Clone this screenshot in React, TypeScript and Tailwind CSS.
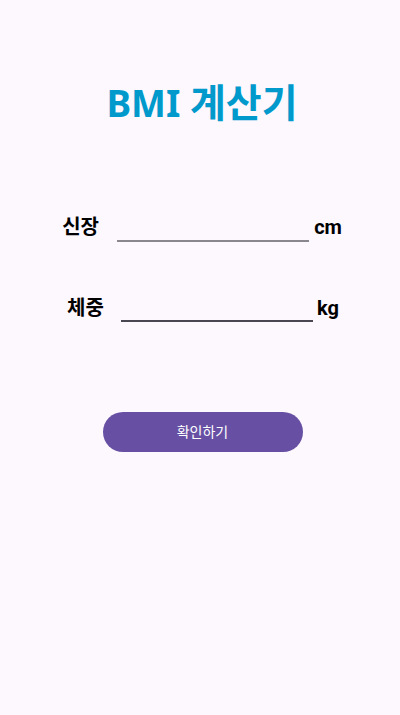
import React from 'react';

const App = () => {
  return (
    <div
      className="min-h-[715px] w-full bg-[#fdf7fe] flex flex-col items-center"
      style={{ fontFamily: 'Roboto, "Noto Sans CJK KR", sans-serif' }}
    >
      <h1
        className="mt-[76px] ml-[4px] text-[37px] font-bold leading-[52px] text-[#0099cc]"
        style={{ fontFamily: '"Noto Sans", "Noto Sans CJK KR", sans-serif' }}
      >
        BMI <span className="text-[39px]">계산기</span>
      </h1>
      <div className="mt-[88px] flex flex-col items-center gap-[56px]">
        {/* 신장 */}
        <div className="flex items-end ml-[4px]">
          <span className="text-[20px] font-bold leading-none text-black mb-[5px] w-[37px]">신장</span>
          <div className="ml-[18px] w-[192px] h-[24px] border-b-2 border-[#8a878f]"></div>
          <span className="ml-[5px] text-[20px] font-bold leading-none text-black mb-[5px]">cm</span>
        </div>
        {/* 체중 */}
        <div className="flex items-end ml-[6px]">
          <span className="text-[20px] font-bold leading-none text-black mb-[4px] w-[37px]">체중</span>
          <div className="ml-[17px] w-[192px] h-[24px] border-b-2 border-[#4b4752]"></div>
          <span className="ml-[4px] text-[20px] font-bold leading-none text-black mb-[4px]">kg</span>
        </div>
      </div>
      <button className="mt-[90px] ml-[5px] w-[200px] h-[40px] rounded-full bg-[#6750a4] text-white text-[14px]">
        확인하기
      </button>
    </div>
  );
};

export default App;
